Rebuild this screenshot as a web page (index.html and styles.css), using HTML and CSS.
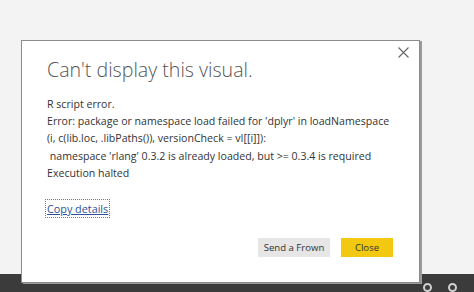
FILE: index.html
```html
<!DOCTYPE html>
<html>
<head>
<meta charset="utf-8">
<link rel="stylesheet" href="styles.css">
</head>
<body>
<div class="page">
  <div class="stage"></div>
  <div class="taskbar">
    <span class="tray-icon"></span>
    <span class="tray-icon"></span>
  </div>
  <div class="dialog">
    <div class="close-x">
      <svg width="11" height="11" viewBox="0 0 11 11"><path d="M0.5 0.5 L10.5 10.5 M10.5 0.5 L0.5 10.5" stroke="#666" stroke-width="1.1" fill="none"/></svg>
    </div>
    <h1 class="title">Can't display this visual.</h1>
    <div class="message">
      <div>R script error.</div>
      <div>Error: package or namespace load failed for 'dplyr' in loadNamespace</div>
      <div>(i, c(lib.loc, .libPaths()), versionCheck = vI[[i]]):</div>
      <div>&nbsp;namespace 'rlang' 0.3.2 is already loaded, but &gt;= 0.3.4 is required</div>
      <div>Execution halted</div>
    </div>
    <div class="copy"><a class="copy-link">Copy details</a></div>
    <div class="actions">
      <button class="btn btn-secondary">Send a Frown</button>
      <button class="btn btn-primary">Close</button>
    </div>
  </div>
</div>
</body>
</html>
```
FILE: styles.css
```css
html, body {
  margin: 0;
  padding: 0;
}
body {
  width: 474px;
  height: 292px;
  overflow: hidden;
  font-family: "Open Sans", "Noto Sans", sans-serif;
}
.page {
  position: relative;
  width: 474px;
  height: 292px;
  display: flex;
  flex-direction: column;
}
.stage {
  height: 278px;
  background: #f3f3f3;
}
.taskbar {
  flex: 1;
  background: #3b3b3b;
  display: flex;
  justify-content: flex-end;
  gap: 16px;
  padding: 9px 17px 0 0;
  box-sizing: border-box;
}
.tray-icon {
  width: 9px;
  height: 9px;
  border: 2px solid #d0d0d0;
  border-radius: 50%;
  box-sizing: border-box;
}
.dialog {
  position: absolute;
  left: 21px;
  top: 40px;
  width: 399px;
  height: 243px;
  box-sizing: border-box;
  background: #fff;
  border: 1px solid #8c8c8c;
  box-shadow: 2px 1px 0 #9a9a9a;
  padding: 0 0 0 25px;
  display: flex;
  flex-direction: column;
}
.close-x {
  position: absolute;
  right: 10px;
  top: 6px;
  width: 11px;
  height: 11px;
  display: flex;
}
.title {
  margin: 14px 0 0 0;
  font-family: "Open Sans", "Noto Sans", sans-serif;
  font-weight: 300;
  font-size: 19.6px;
  line-height: 30px;
  color: #555;
}
.message {
  margin-top: 11px;
  font-size: 10.6px;
  line-height: 17.2px;
  color: #333;
  white-space: nowrap;
}
.copy {
  margin-top: 14px;
}
.copy-link {
  font-size: 10.8px;
  color: #2e4f9a;
  text-decoration: underline;
  outline: 1px dotted #777;
  outline-offset: 1px;
  line-height: 14px;
}
.actions {
  margin-top: 20px;
  display: flex;
  gap: 11px;
  padding-left: 211px;
}
.btn {
  border: none;
  height: 19px;
  padding: 0;
  font-family: "Open Sans", "Noto Sans", sans-serif;
  font-size: 9.6px;
  color: #333;
}
.btn-secondary {
  width: 72px;
  background: #e6e6e6;
}
.btn-primary {
  width: 52px;
  background: #f2c811;
}
```
